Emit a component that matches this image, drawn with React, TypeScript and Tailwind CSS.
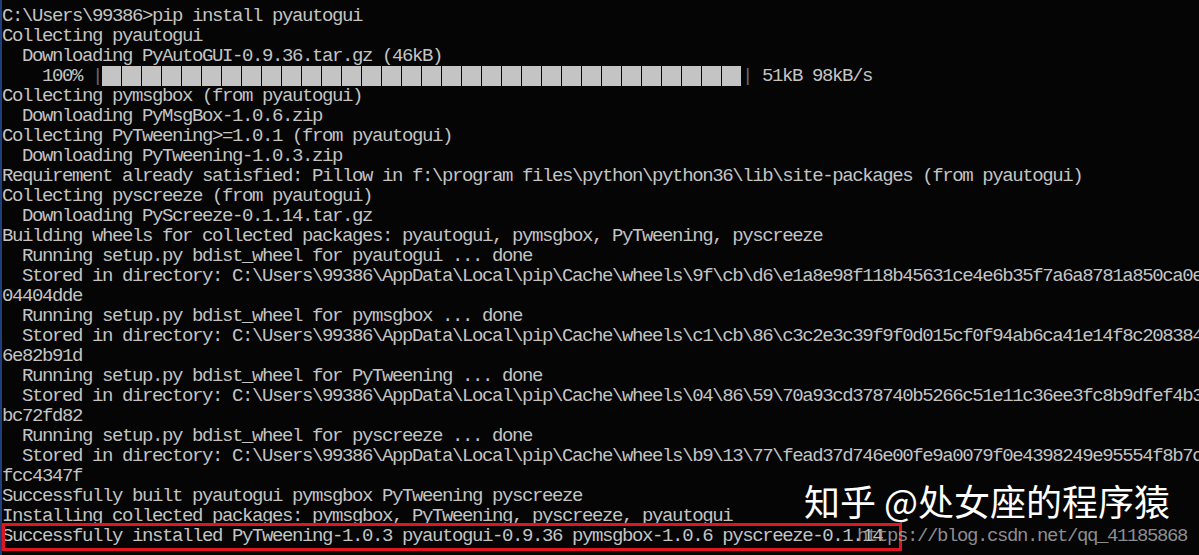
import React from 'react';

const W = 'C:\\Users\\99386\\AppData\\Local\\pip\\Cache\\wheels\\';

const lines = [
  'C:\\Users\\99386>pip install pyautogui',
  'Collecting pyautogui',
  '  Downloading PyAutoGUI-0.9.36.tar.gz (46kB)',
  '__progress__',
  'Collecting pymsgbox (from pyautogui)',
  '  Downloading PyMsgBox-1.0.6.zip',
  'Collecting PyTweening>=1.0.1 (from pyautogui)',
  '  Downloading PyTweening-1.0.3.zip',
  'Requirement already satisfied: Pillow in f:\\program files\\python\\python36\\lib\\site-packages (from pyautogui)',
  'Collecting pyscreeze (from pyautogui)',
  '  Downloading PyScreeze-0.1.14.tar.gz',
  'Building wheels for collected packages: pyautogui, pymsgbox, PyTweening, pyscreeze',
  '  Running setup.py bdist_wheel for pyautogui ... done',
  '  Stored in directory: ' + W + '9f\\cb\\d6\\e1a8e98f118b45631ce4e6b35f7a6a8781a850ca0e',
  '04404dde',
  '  Running setup.py bdist_wheel for pymsgbox ... done',
  '  Stored in directory: ' + W + 'c1\\cb\\86\\c3c2e3c39f9f0d015cf0f94ab6ca41e14f8c208384',
  '6e82b91d',
  '  Running setup.py bdist_wheel for PyTweening ... done',
  '  Stored in directory: ' + W + '04\\86\\59\\70a93cd378740b5266c51e11c36ee3fc8b9dfef4b3',
  'bc72fd82',
  '  Running setup.py bdist_wheel for pyscreeze ... done',
  '  Stored in directory: ' + W + 'b9\\13\\77\\fead37d746e00fe9a0079f0e4398249e95554f8b7c',
  'fcc4347f',
  'Successfully built pyautogui pymsgbox PyTweening pyscreeze',
  'Installing collected packages: pymsgbox, PyTweening, pyscreeze, pyautogui',
  'Successfully installed PyTweening-1.0.3 pyautogui-0.9.36 pymsgbox-1.0.6 pyscreeze-0.1.14',
];

function ProgressRow() {
  return (
    <div className="flex h-[20px] items-center whitespace-pre">
      <span>{'    100% '}</span>
      <span className="text-[#6a6a6a]">|</span>
      <div className="flex h-[20px]">
        {Array.from({ length: 32 }).map((_, i) => (
          <span key={i} className="block w-[19px] h-[20px] mr-[1px] bg-[#c4c4c4]" />
        ))}
      </div>
      <span className="text-[#6a6a6a]">|</span>
      <span>{' 51kB 98kB/s'}</span>
    </div>
  );
}

export default function App() {
  return (
    <div className="relative w-[1199px] h-[555px] overflow-hidden bg-[#050505] border-l-2 border-[#1f3e7c]">
      {/* console output */}
      <div className="pt-[6px] text-[#c4c4c4] text-[19px] leading-[20px] tracking-[-1.4px] font-['Liberation_Mono','Courier_New',monospace]">
        {lines.map((line, i) =>
          line === '__progress__' ? (
            <ProgressRow key={i} />
          ) : (
            <div key={i} className="h-[20px] whitespace-pre">
              {line}
            </div>
          )
        )}
      </div>

      {/* red highlight around last line */}
      <div className="absolute left-0 top-[523px] w-[900px] h-[28px] border-[3px] border-[#e0161e]" />

      {/* watermarks */}
      <div className="absolute left-[802px] top-[482px] text-white text-[36px] leading-none font-['Noto_Sans_CJK_SC',sans-serif]">
        知乎 @处女座的程序猿
      </div>
      <div className="absolute left-[855px] top-[526px] h-[20px] whitespace-pre text-[#a0a0a0]/90 text-[19px] leading-[20px] tracking-[-1.4px] font-['Liberation_Mono','Courier_New',monospace]">
        https://blog.csdn.net/qq_41185868
      </div>
    </div>
  );
}
